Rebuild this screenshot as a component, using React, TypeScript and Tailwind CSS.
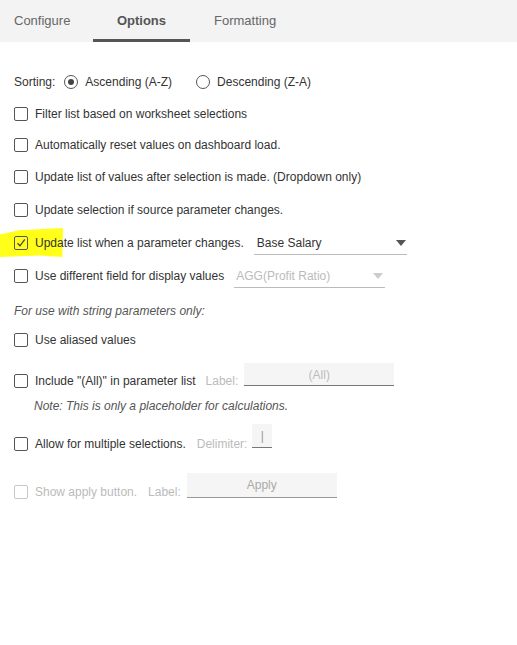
import React from 'react';

const Box = ({ checked = false, disabled = false }: { checked?: boolean; disabled?: boolean }) => (
  <span
    className={`relative w-[14px] h-[14px] shrink-0 rounded-[2px] border bg-transparent ${
      disabled ? 'border-[#c8c8c8]' : 'border-[#555]'
    }`}
  >
    {checked && (
      <svg viewBox="0 0 14 14" className="absolute -left-px -top-px w-[14px] h-[14px]">
        <path d="M3.5 7.2 L6 9.8 L10.8 3.4" fill="none" stroke="#444" strokeWidth="1.3" />
      </svg>
    )}
  </span>
);

const Radio = ({ on = false }: { on?: boolean }) => (
  <span className="w-[14px] h-[14px] rounded-full border border-[#555] flex items-center justify-center shrink-0">
    {on && <span className="w-[6px] h-[6px] rounded-full bg-[#444]" />}
  </span>
);

const Caret = ({ color }: { color: string }) => (
  <svg viewBox="0 0 10 6" className="w-[10px] h-[6px]">
    <path d="M0 0 L10 0 L5 6 Z" fill={color} />
  </svg>
);

const App = () => {
  return (
    <div
      className="w-[517px] h-[645px] bg-white text-[12px] text-[#333] relative overflow-hidden"
      style={{ fontFamily: '"Liberation Sans", Arial, sans-serif' }}
    >
      {/* Tabs */}
      <div className="h-[42px] bg-[#f3f3f3] flex items-stretch text-[13px]">
        <div className="pl-[14px] w-[93px] flex items-center text-[#666]">Configure</div>
        <div className="w-[97px] flex items-center justify-center font-bold text-[#555] border-b-[3px] border-[#555] pt-[3px]">
          Options
        </div>
        <div className="pl-[24px] flex items-center text-[#666]">Formatting</div>
      </div>

      {/* highlighter mark */}
      <div className="absolute left-0 top-[228px] w-[63px] h-[29px] bg-[#ffff1a] [clip-path:polygon(0_22%,30%_8%,100%_0,99%_100%,62%_95%,0_100%)]" />

      <div className="relative px-[14px] pt-[29px] flex flex-col">
        <div className="h-[22px] flex items-center">
          <span className="mr-[9px]">Sorting:</span>
          <Radio on />
          <span className="ml-[7px]">Ascending (A-Z)</span>
          <span className="ml-[24px]">
            <Radio />
          </span>
          <span className="ml-[7px]">Descending (Z-A)</span>
        </div>

        <div className="h-[22px] mt-[10px] flex items-center gap-[7px]">
          <Box />
          <span>Filter list based on worksheet selections</span>
        </div>
        <div className="h-[22px] mt-[9px] flex items-center gap-[7px]">
          <Box />
          <span>Automatically reset values on dashboard load.</span>
        </div>
        <div className="h-[22px] mt-[10px] flex items-center gap-[7px]">
          <Box />
          <span>Update list of values after selection is made. (Dropdown only)</span>
        </div>
        <div className="h-[22px] mt-[11px] flex items-center gap-[7px]">
          <Box />
          <span>Update selection if source parameter changes.</span>
        </div>

        <div className="h-[24px] mt-[10px] flex items-center">
          <Box checked />
          <span className="ml-[7px]">Update list when a parameter changes.</span>
          <div className="ml-[10px] w-[153px] h-[24px] border-b border-[#bbb] flex items-center justify-between pl-[3px] pr-[1px]">
            <span>Base Salary</span>
            <Caret color="#555" />
          </div>
        </div>

        <div className="h-[24px] mt-[9px] flex items-center">
          <Box />
          <span className="ml-[7px]">Use different field for display values</span>
          <div className="ml-[10px] w-[151px] h-[24px] border-b border-[#bbb] flex items-center justify-between pl-[2px] pr-[2px] text-[#bbb]">
            <span>AGG(Profit Ratio)</span>
            <Caret color="#ccc" />
          </div>
        </div>

        <div className="mt-[12px] h-[22px] flex items-center italic text-[#555]">
          For use with string parameters only:
        </div>

        <div className="h-[22px] mt-[7px] flex items-center gap-[7px]">
          <Box />
          <span>Use aliased values</span>
        </div>

        <div className="mt-[12px] h-[26px] flex items-end">
          <div className="h-[16px] flex items-center">
            <Box />
            <span className="ml-[7px]">Include "(All)" in parameter list</span>
            <span className="ml-[10px] text-[#bbb]">Label:</span>
          </div>
          <div className="ml-[6px] w-[150px] h-[23px] mb-[3px] bg-[#f5f5f5] border-b border-[#777] flex items-start justify-center pt-[3px] text-[#bbb]">
            (All)
          </div>
        </div>

        <div className="mt-[6px] pl-[20px] h-[22px] flex items-center italic text-[#555]">
          Note: This is only a placeholder for calculations.
        </div>

        <div className="mt-[7px] h-[28px] flex items-end">
          <div className="h-[16px] flex items-center">
            <Box />
            <span className="ml-[7px]">Allow for multiple selections.</span>
            <span className="ml-[11px] text-[#bbb]">Delimiter:</span>
          </div>
          <div className="ml-[5px] w-[20px] h-[24px] mb-[4px] bg-[#f5f5f5] border-b border-[#777] flex items-start justify-center pt-[3px] text-[#999]">
            |
          </div>
        </div>

        <div className="mt-[21px] h-[27px] flex items-end">
          <div className="h-[16px] flex items-center text-[#bbb]">
            <Box disabled />
            <span className="ml-[7px]">Show apply button.</span>
            <span className="ml-[11px]">Label:</span>
          </div>
          <div className="ml-[6px] w-[150px] h-[25px] mb-[2px] bg-[#f5f5f5] border-b border-[#999] flex items-start justify-center pt-[3px] text-[#aaa]">
            Apply
          </div>
        </div>
      </div>
    </div>
  );
};

export default App;
